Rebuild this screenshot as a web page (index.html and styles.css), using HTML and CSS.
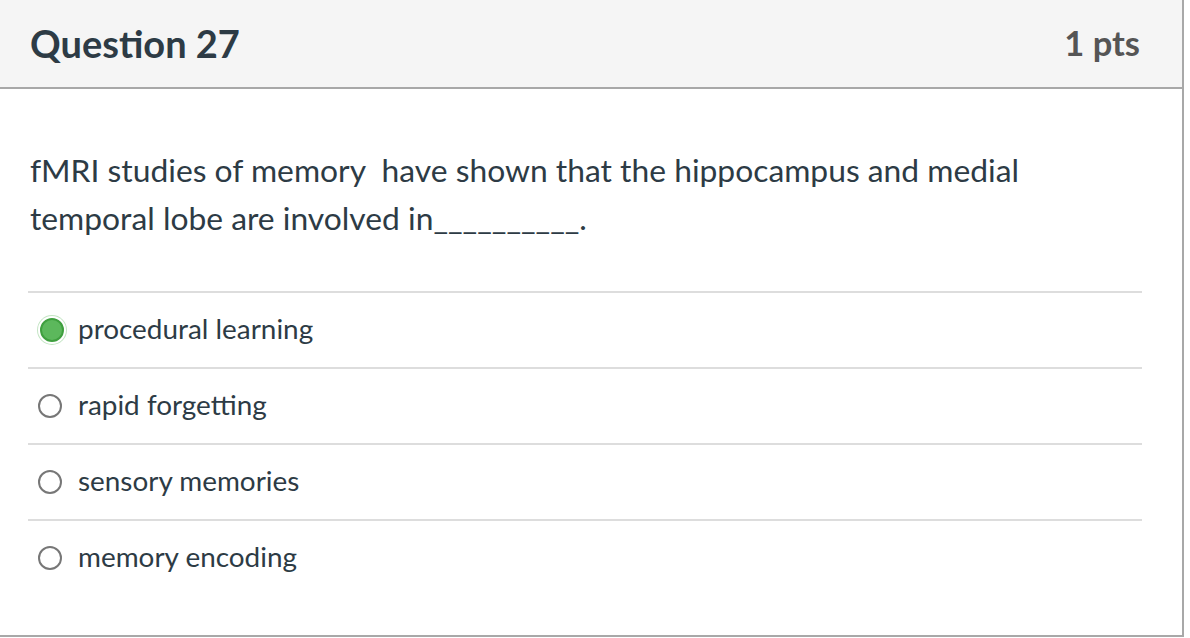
FILE: index.html
```html
<!DOCTYPE html>
<html>
<head>
<meta charset="utf-8">
<link rel="stylesheet" href="styles.css">
</head>
<body>
<div class="card">
  <div class="header">
    <div class="title">Question 27</div>
    <div class="pts">1 pts</div>
  </div>
  <div class="body">
    <p class="question">fMRI studies of memory&nbsp; have shown that the hippocampus and medial temporal lobe are involved in__________.</p>
    <div class="answers">
      <div class="answer">
        <span class="radio selected"></span>
        <span class="label">procedural learning</span>
      </div>
      <div class="answer">
        <span class="radio"></span>
        <span class="label">rapid forgetting</span>
      </div>
      <div class="answer">
        <span class="radio"></span>
        <span class="label">sensory memories</span>
      </div>
      <div class="answer">
        <span class="radio"></span>
        <span class="label">memory encoding</span>
      </div>
    </div>
  </div>
</div>
</body>
</html>
```
FILE: styles.css
```css
html, body {
  margin: 0;
  padding: 0;
  background: #ffffff;
}
body {
  font-family: Lato, "Open Sans", sans-serif;
  color: #2d3b45;
  width: 1190px;
  height: 638px;
  overflow: hidden;
}
.card {
  border-right: 2px solid #a8a8a8;
  border-bottom: 2px solid #a8a8a8;
  box-sizing: border-box;
  width: 1184px;
  height: 637px;
  display: flex;
  flex-direction: column;
}
.header {
  height: 87px;
  background: #f5f5f5;
  border-bottom: 2px solid #a8a8a8;
  display: flex;
  align-items: center;
  justify-content: space-between;
  padding: 0 42px 0 30px;
  flex-shrink: 0;
}
.title {
  font-size: 38px;
  font-weight: 700;
  color: #2d3b45;
  padding-bottom: 2px;
}
.pts {
  font-size: 34.5px;
  font-weight: 700;
  color: #555555;
  padding-bottom: 2px;
}
.body {
  padding: 0 40px 0 28px;
}
.question {
  margin: 57px 0 0 2px;
  font-size: 31.8px;
  line-height: 48px;
  width: 1040px;
}
.answers {
  margin-top: 49px;
}
.answer {
  border-top: 2px solid #dddddd;
  height: 74px;
  display: flex;
  align-items: center;
}
.radio {
  width: 20px;
  height: 20px;
  border: 2px solid #777777;
  border-radius: 50%;
  margin-left: 10px;
  margin-right: 16px;
  flex-shrink: 0;
  box-sizing: content-box;
}
.radio.selected {
  width: 20px;
  height: 20px;
  margin-left: 12px;
  margin-right: 14px;
  background: #5cb85c;
  border: 2px solid #3f9f3f;
  box-shadow: 0 0 0 2px #ffffff, 0 0 0 3px #c4e5c4;
}
.label {
  font-size: 27.9px;
  padding-bottom: 5px;
}
```
